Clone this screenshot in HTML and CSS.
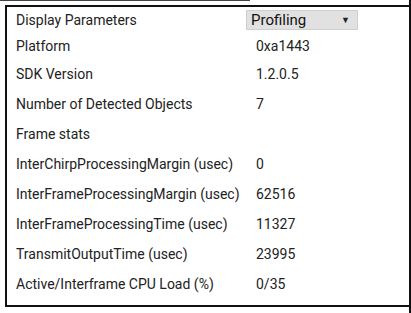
FILE: index.html
```html
<!DOCTYPE html>
<html lang="en">

<head>
    <meta charset="UTF-8">
    <meta name="viewport" content="width=device-width, initial-scale=1.0">
    <title>Display Parameters</title>
    <link rel="stylesheet" href="styles.css">
</head>

<body>
    <div class="page">
        <div class="top-strip"></div>
        <div class="panel">
            <div class="row head">
                <div class="label">Display Parameters</div>
                <div class="value">
                    <div class="select">
                        <span>Profiling</span>
                        <span class="arrow">▼</span>
                    </div>
                </div>
            </div>
            <div class="row short">
                <div class="label">Platform</div>
                <div class="value">0xa1443</div>
            </div>
            <div class="row">
                <div class="label">SDK Version</div>
                <div class="value">1.2.0.5</div>
            </div>
            <div class="row">
                <div class="label">Number of Detected Objects</div>
                <div class="value">7</div>
            </div>
            <div class="row">
                <div class="label">Frame stats</div>
                <div class="value"></div>
            </div>
            <div class="row">
                <div class="label">InterChirpProcessingMargin (usec)</div>
                <div class="value">0</div>
            </div>
            <div class="row">
                <div class="label">InterFrameProcessingMargin (usec)</div>
                <div class="value">62516</div>
            </div>
            <div class="row">
                <div class="label">InterFrameProcessingTime (usec)</div>
                <div class="value">11327</div>
            </div>
            <div class="row">
                <div class="label">TransmitOutputTime (usec)</div>
                <div class="value">23995</div>
            </div>
            <div class="row">
                <div class="label">Active/Interframe CPU Load (%)</div>
                <div class="value">0/35</div>
            </div>
        </div>
    </div>
</body>

</html>
```

FILE: styles.css
```css
body {
    margin: 0;
    background-color: #fff;
    font-family: Roboto, "Liberation Sans", sans-serif;
    font-size: 14px;
    color: #222;
}

.page {
    width: 409px;
    height: 313px;
    border-right: 2px solid #111;
    position: relative;
}

.top-strip {
    position: absolute;
    left: 0;
    top: 0;
    width: 250px;
    height: 1px;
    background-color: #444;
}

.panel {
    position: absolute;
    left: 5px;
    top: 5px;
    width: 402px;
    height: 298px;
    border: 2px solid #111;
    border-right: none;
}

.row {
    display: grid;
    grid-template-columns: 239px 1fr;
    align-items: center;
    height: 30px;
}

.row.head,
.row.short {
    height: 26px;
}

.label {
    padding-left: 9px;
}

.value {
    padding-left: 10px;
}

.head .value {
    padding-left: 0;
}

.select {
    display: flex;
    justify-content: space-between;
    align-items: center;
    width: 99px;
    height: 18px;
    padding: 0 7px 0 4px;
    background-color: #e1e1e1;
    border: 1px solid #cfcfcf;
    font-size: 15px;
    color: #111;
}

.arrow {
    font-size: 9px;
    color: #222;
}
```
